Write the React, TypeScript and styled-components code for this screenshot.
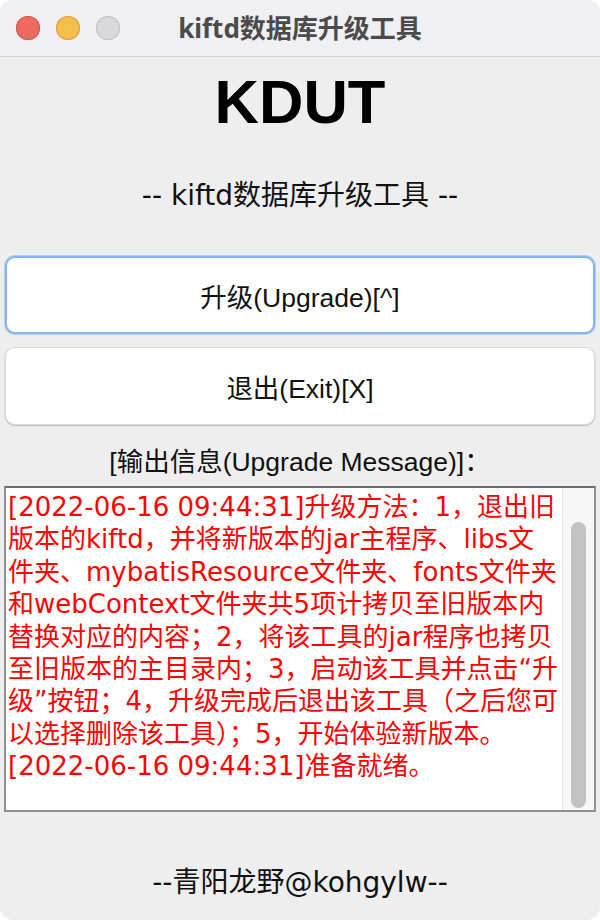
import React from "react";
import styled, { createGlobalStyle } from "styled-components";

const logLines: string[] = [
  "[2022-06-16 09:44:31]升级方法：1，退出旧",
  "版本的kiftd，并将新版本的jar主程序、libs文",
  "件夹、mybatisResource文件夹、fonts文件夹",
  "和webContext文件夹共5项计拷贝至旧版本内",
  "替换对应的内容；2，将该工具的jar程序也拷贝",
  "至旧版本的主目录内；3，启动该工具并点击“升",
  "级”按钮；4，升级完成后退出该工具（之后您可",
  "以选择删除该工具）；5，开始体验新版本。",
  "[2022-06-16 09:44:31]准备就绪。",
];

const lights = [
  { fill: "#ee6a5f", edge: "#d4564b" },
  { fill: "#f5bf4f", edge: "#d9a23f" },
  { fill: "#d9d9db", edge: "#bfbfc1" },
];

const App = () => {
  return (
    <>
      <GlobalStyle />
      <Window>
        <TitleBar>
          <Lights>
            {lights.map((l, i) => (
              <Light key={i} $fill={l.fill} $edge={l.edge} />
            ))}
          </Lights>
          <WindowTitle>kiftd数据库升级工具</WindowTitle>
          <span />
        </TitleBar>
        <Content>
          <Heading>KDUT</Heading>
          <Subtitle>-- kiftd数据库升级工具 --</Subtitle>
          <Buttons>
            <Button $focused>升级(Upgrade)[^]</Button>
            <Button>退出(Exit)[X]</Button>
          </Buttons>
          <Label>[输出信息(Upgrade Message)]：</Label>
          <Log>
            <LogText>
              {logLines.map((line, i) => (
                <LogLine key={i}>{line}</LogLine>
              ))}
            </LogText>
            <Track>
              <Thumb />
            </Track>
          </Log>
          <Footer>--青阳龙野@kohgylw--</Footer>
        </Content>
      </Window>
    </>
  );
};

const GlobalStyle = createGlobalStyle`
  html, body {
    margin: 0;
    padding: 0;
    background: #ffffff;
  }
  #root {
    width: 600px;
    height: 920px;
  }
`;

const Window = styled.div`
  width: 600px;
  height: 920px;
  border-radius: 13px;
  overflow: hidden;
  background: #eeeeee;
  display: flex;
  flex-direction: column;
`;

const TitleBar = styled.div`
  flex: none;
  height: 56px;
  padding: 0 16px;
  background: #f0f0f2;
  border-bottom: 1px solid #d3d3d3;
  display: grid;
  grid-template-columns: 1fr auto 1fr;
  align-items: center;
`;

const Lights = styled.div`
  display: flex;
  gap: 16px;
`;

const Light = styled.span<{ $fill: string; $edge: string }>`
  width: 24px;
  height: 24px;
  border-radius: 50%;
  background: ${(p) => p.$fill};
  box-shadow: inset 0 0 0 1px ${(p) => p.$edge};
`;

const WindowTitle = styled.div`
  font-family: "Noto Sans", "Noto Sans CJK SC", sans-serif;
  font-weight: 700;
  font-size: 26px;
  color: #4b4b4b;
  line-height: 32px;
`;

const Content = styled.div`
  flex: 1;
  padding: 0 5px;
  display: flex;
  flex-direction: column;
`;

const Heading = styled.div`
  margin-top: 15px;
  text-align: center;
  font-family: "Liberation Sans", Arial, sans-serif;
  font-weight: 700;
  font-size: 61.5px;
  line-height: 60px;
  color: #000;
`;

const Subtitle = styled.div`
  margin-top: 46px;
  text-align: center;
  font-family: "DejaVu Sans", "Noto Sans CJK SC", sans-serif;
  font-size: 28px;
  line-height: 36px;
  color: #111;
`;

const Buttons = styled.div`
  margin-top: 42px;
  display: flex;
  flex-direction: column;
  gap: 13px;
`;

const Button = styled.button<{ $focused?: boolean }>`
  height: 78px;
  width: 100%;
  background: #ffffff;
  border-radius: 10px;
  border: ${(p) => (p.$focused ? "2px solid #88b4ee" : "1px solid #d9d9d9")};
  box-shadow: ${(p) =>
    p.$focused
      ? "0 0 0 1px rgba(136, 180, 238, 0.55)"
      : "0 1px 1.5px rgba(0, 0, 0, 0.22)"};
  font-family: "Liberation Sans", "Noto Sans CJK SC", sans-serif;
  font-size: 26.5px;
  color: #111;
  cursor: pointer;
  padding: 0;
`;

const Label = styled.div`
  margin-top: 21px;
  text-align: center;
  font-family: "Liberation Sans", "Noto Sans CJK SC", sans-serif;
  font-size: 26.5px;
  line-height: 32px;
  color: #111;
`;

const Log = styled.div`
  margin: 8px -1px 0;
  height: 326px;
  box-sizing: border-box;
  display: flex;
  background: #ffffff;
  border: 2px solid #909090;
  border-top-color: #6c6c6c;
`;

const LogText = styled.div`
  flex: 1;
  padding: 3px 0 0 2px;
  overflow: hidden;
  font-family: "DejaVu Sans", "Noto Sans CJK SC", sans-serif;
  font-size: 26px;
  line-height: 32.4px;
  color: #ff0000;
`;

const LogLine = styled.div`
  white-space: pre;
`;

const Track = styled.div`
  flex: none;
  width: 32px;
  box-sizing: border-box;
  padding: 34px 8px 2px 8px;
  background: #f7f7f7;
  border-left: 1px solid #e6e6e6;
  display: flex;
`;

const Thumb = styled.div`
  flex: 1;
  border-radius: 8px;
  background: #c2c2c2;
`;

const Footer = styled.div`
  margin-top: auto;
  margin-bottom: 19px;
  text-align: center;
  font-family: "DejaVu Sans", "Noto Sans CJK SC", sans-serif;
  font-size: 28px;
  line-height: 36px;
  color: #111;
`;

export default App;
